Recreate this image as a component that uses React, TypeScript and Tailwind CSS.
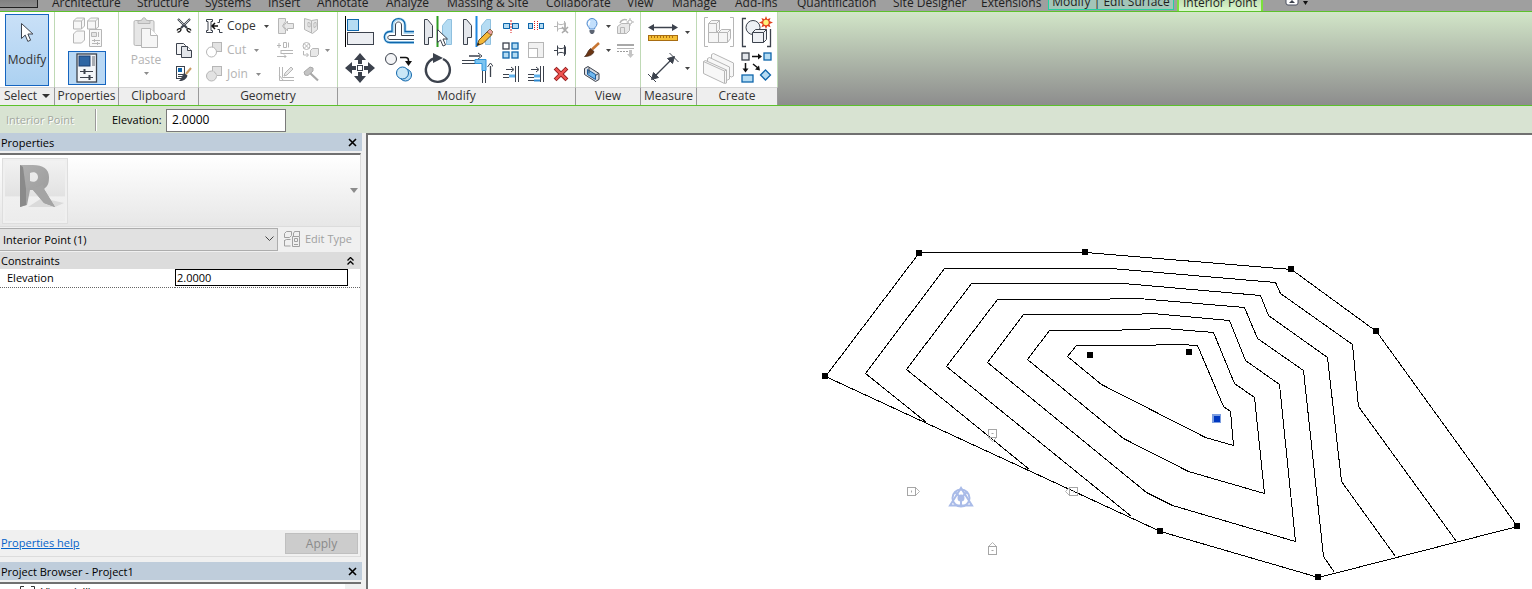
import type { ReactNode } from "react";
import clsx from "clsx";

interface IconProps {
    w?: number;
    h?: number;
    children: ReactNode;
}

const Icon = ({ w = 16, h = 16, children }: IconProps) => (
    <svg width={w} height={h} viewBox={`0 0 ${w} ${h}`} fill="none" className="shrink-0" aria-hidden="true">
        {children}
    </svg>
);

const Caret = ({ dim }: { dim?: boolean }) => (
    <svg width="5" height="3" viewBox="0 0 5 3" className={clsx("shrink-0", dim ? "fill-[#8c8c8c]" : "fill-[#444]")} aria-hidden="true">
        <path d="M0 0h5L2.5 3z" />
    </svg>
);

const DARK = "#3c424d";
const DIM = "#b6b6b6";
const PALE = "#e8e8e8";
const BLUE = "#0f66ab";
const SKY = "#b5dcf3";

/* ---------- tabs ---------- */

const tabs = [
    { name: "Architecture", width: "w-[85px]" },
    { name: "Structure", width: "w-[68px]" },
    { name: "Systems", width: "w-[63px]" },
    { name: "Insert", width: "w-[49px]" },
    { name: "Annotate", width: "w-[69px]" },
    { name: "Analyze", width: "w-[61px]" },
    { name: "Massing & Site", width: "w-[99px]" },
    { name: "Collaborate", width: "w-[81px]" },
    { name: "View", width: "w-[45px]" },
    { name: "Manage", width: "w-[63px]" },
    { name: "Add-Ins", width: "w-[62px]" },
    { name: "Quantification", width: "w-[96px]" },
    { name: "Site Designer", width: "w-[88px]" },
    { name: "Extensions", width: "w-[67px]" },
];

const TabBar = () => (
    <nav className="flex h-3 items-end overflow-hidden border-b border-[#5cc12b] bg-[#9f9f9f] text-[#1e1e1e]">
        <button aria-label="Application menu" className="mb-[3px] mr-[14px] h-6 w-[38px] shrink-0 border-b border-r border-[#222] bg-linear-to-b from-[#666] to-[#8d8d8d]" />
        {tabs.map((tab) => (
            <button key={tab.name} className={clsx("h-4 shrink-0 whitespace-nowrap text-left leading-4", tab.width)}>
                {tab.name}
            </button>
        ))}
        <button className="mb-px mr-[3px] h-4 w-[126px] shrink-0 whitespace-nowrap border border-[#26cfa0] bg-[#a3c5b8] leading-[14px]">
            Modify | Edit Surface
        </button>
        <button className="h-4 w-[86px] shrink-0 whitespace-nowrap border-x-2 border-[#7be03c] bg-linear-to-b from-[#b9d6a8] to-[#dcf7cf] leading-4">
            Interior Point
        </button>
        <button aria-label="Minimize ribbon" className="mb-[5px] ml-[22px] flex items-end gap-1">
            <Icon w={14} h={11}>
                <rect x="1" y="1" width="12" height="9" rx="2" fill="#fff" stroke="#4a5060" />
                <path d="M7 5l3 3H4z" fill={DARK} />
            </Icon>
            <Icon w={5} h={9}>
                <path d="M0 4h5L2.5 8z" fill="#111" />
            </Icon>
        </button>
    </nav>
);

/* ---------- ribbon icons ---------- */

const CursorIcon = () => (
    <Icon w={14} h={22}>
        <path d="M1.5 1.5v15l3.7-3.4 2.6 6.3 2.8-1.2-2.7-6.2h5z" fill="#fff" stroke={DARK} />
    </Icon>
);

const TypePropertiesIcon = () => (
    <Icon w={32} h={32}>
        <g fill="#f7f7f7" stroke={DIM}>
            <path d="M2.500 5l3-3h8v8l-3 3h-8zM16.500 5l3-3h8v9l-3 2h-8zM2.500 18l3-3h8v9l-3 3h-8z" />
            <path d="M2.500 5h8v8M10.500 5l3-3M16.500 5h8v8M24.500 5l3-3" />
            <path d="M18.500 13.500h12v17h-12z" />
            <path d="M20.500 16.500h5v4h-5z" fill="#e4e4e4" />
            <path d="M27.500 16v5M21 24.500h8M21 27.500h8M23.500 23v3M26.500 26v3" />
        </g>
    </Icon>
);

const PropertiesIcon = () => (
    <Icon w={22} h={30}>
        <rect x="1" y="1" width="19.500" height="28" fill="#f4f6f9" stroke={DARK} strokeWidth="1.300" />
        <rect x="3" y="3" width="11" height="10" fill="#2f66a3" stroke="#1c3f70" />
        <rect x="16" y="3" width="3" height="10" fill="#a9adb3" />
        <path d="M4 18.500h13M4 24.500h13" stroke={DARK} />
        <path d="M8.500 16v5M13.500 22v5" stroke={DARK} strokeWidth="2" />
    </Icon>
);

const PasteIcon = () => (
    <Icon w={26} h={31}>
        <g stroke={DIM}>
            <rect x="1" y="3.500" width="20" height="25" rx="1.500" fill="#e6e6e6" />
            <path d="M5 6.500V4l4-1c0-3 4-3 4 0l4 1v2.500z" fill="#d8d8d8" />
            <path d="M8.500 11.500h9l7 7v12h-16z" fill="#f6f6f6" />
            <path d="M17.500 11.500v7h7" fill="#fff" />
        </g>
    </Icon>
);

const ScissorsIcon = () => (
    <Icon>
        <path d="M2 1l9 9M14 1l-9 9" stroke={DARK} strokeWidth="2.200" />
        <path d="M2.500 1.500l5 5M13.500 1.500l-5 5" stroke="#fff" strokeWidth=".7" />
        <path d="M1 12.500c1-2 4-2.500 4-1s-2 3-3.500 2.500M15 12.500c-1-2-4-2.500-4-1s2 3 3.500 2.500" stroke="#111" strokeWidth="1.300" />
    </Icon>
);

const CopyClipIcon = () => (
    <Icon>
        <path d="M.5 1.500h7l2 2v9h-9z" fill="#f3f4f6" stroke={DARK} />
        <path d="M5.500 4.500h6l4 4v7h-10z" fill="#e2e5ea" stroke={DARK} />
        <path d="M11.500 4.500v4h4" fill="#fff" stroke={DARK} />
    </Icon>
);

const MatchIcon = () => (
    <Icon>
        <rect x=".5" y=".5" width="8" height="12" fill="#fff" stroke={DARK} />
        <rect x="2" y="2" width="4" height="4" fill={BLUE} />
        <path d="M2 8.500h5M2 10.500h4" stroke={DARK} />
        <path d="M15 2l-5 6" stroke="#c99b62" strokeWidth="2" />
        <path d="M8 7l3.500 2.500c-1 4-5 6-9 5.500 3-1 3-5 5.500-8z" fill={DARK} />
    </Icon>
);

const CopeIcon = () => (
    <Icon w={17}>
        <path d="M.5 1.500h6v2h-1.500v9h1.500v2h-6v-2H2v-9H.5z" fill="#fff" stroke={DARK} />
        <path d="M6 8h6M9 5L6 8l3 3" stroke="#111" strokeWidth="1.500" />
        <path d="M16.500 1.500h-3v3h-2M11.500 11.500h2v3h3" stroke={DARK} />
    </Icon>
);

const CutIcon = () => (
    <Icon>
        <rect x="6.500" y=".5" width="9" height="9" fill="#e2e2e2" stroke={DIM} />
        <circle cx="5.500" cy="10" r="5" fill="#fff" stroke={DIM} />
    </Icon>
);

const JoinIcon = () => (
    <Icon>
        <rect x="6.500" y=".5" width="9" height="9" fill="#e2e2e2" stroke={DIM} />
        <circle cx="5.500" cy="10" r="5" fill="#e2e2e2" stroke={DIM} />
        <path d="M7 5.500v4h3.500" stroke="#e2e2e2" strokeWidth="2" />
    </Icon>
);

const CutbackIcon = () => (
    <Icon>
        <path d="M.5.5h7v3l-3 4.500 3 4v3.500h-7z" fill={PALE} stroke={DIM} />
        <path d="M15.500 5.500h-6V3l-4 5 4 5v-2.500h6z" fill={PALE} stroke={DIM} />
    </Icon>
);

const SurfaceIcon = () => (
    <Icon>
        <path d="M1.500.5l7 2 6-1v10l-5 4-8-4z" fill={PALE} stroke={DIM} />
        <path d="M8.500 3v12M5 4.500l2 .5v4l-2-.5zM11 5l2-.500v4l-2 1z" fill="#fff" stroke={DIM} />
    </Icon>
);

const BeamJoinIcon = () => (
    <Icon w={17}>
        <path d="M0 3.500h4M2 1v5M6.500.5v5h3v-5zM11.500.5v5M4 8.500h12M4 11.500h12M4 8v4M0 14.500h9M7 12.500l2 2-2 2" stroke={DIM} />
    </Icon>
);

const UnjoinIcon = () => (
    <Icon w={17}>
        <circle cx="4.500" cy="4" r="3.500" stroke={DIM} />
        <path d="M2 1.500l5 5M7 1.500l-5 5M1.500 9v4H6M4.500 11l2 2-2 2" stroke={DIM} />
        <path d="M8.500 8.500l2-2h6v6l-2 2h-6z" fill={PALE} stroke={DIM} />
    </Icon>
);

const WallJoinIcon = () => (
    <Icon>
        <path d="M1.500 1v13.500H16M4.500 1v10.500H16M1 9l4 5" stroke={DIM} />
        <path d="M6 10l1-3 6-6 2 2-6 6z" fill={PALE} stroke={DIM} />
    </Icon>
);

const HammerIcon = () => (
    <Icon>
        <path d="M7 7l8 7.500" stroke="#a8a8a8" strokeWidth="2.200" />
        <path d="M1 6l6-5 3 1v3L5 9.500 2 9z" fill="#c4c4c4" stroke="#a8a8a8" />
    </Icon>
);

const AlignIcon = () => (
    <Icon w={32} h={32}>
        <path d="M1.500 0v31" stroke="#000" />
        <rect x="3.500" y="3.500" width="11" height="11" fill={SKY} stroke={BLUE} />
        <rect x="3.500" y="16.500" width="26" height="12" fill="#eceef2" stroke={DARK} />
    </Icon>
);

const OffsetIcon = () => (
    <Icon w={32} h={32}>
        <path d="M31 16.500H22V9c0-8-12-8-12 0v6.500H7c-7 0-7 11 0 11h24" stroke={SKY} strokeWidth="3" />
        <path d="M31 15.500H22V9c0-8.500-13-8.500-13 0v6.500H7c-7.500 0-7.500 11 0 11h24" stroke={BLUE} strokeWidth="1.300" />
        <path d="M31 19.500H18.500V9c0-4-6-4-6 0v10.500H7c-3 0-3 4 0 4h24" fill="#fff" stroke={DARK} />
    </Icon>
);

const MirrorPickIcon = () => (
    <Icon w={32} h={32}>
        <path d="M2.500 3.500h3l5 6v12h-4v7h-4z" fill="#e4e7ec" stroke={DARK} />
        <path d="M29.500 3.500h-4l-5 6v12h4v7h5z" fill={SKY} stroke="#8fc0df" />
        <path d="M15.500 0v31" stroke="#2c9b22" strokeWidth="2" />
        <path d="M15.500 13.500v13l3-2.500 2.500 6 2.500-1-2.500-6h4.500z" fill="#fff" stroke={DARK} />
    </Icon>
);

const MirrorDrawIcon = () => (
    <Icon w={32} h={32}>
        <path d="M2.500 3.500h3l5 6v12h-4v7h-4z" fill="#e4e7ec" stroke={DARK} />
        <path d="M29.500 3.500h-4l-5 6v12h4v7h5z" fill={SKY} stroke="#8fc0df" />
        <path d="M15.500 0v31" stroke="#1f86e0" strokeWidth="2" />
        <path d="M16 29.500l2-5.500 9-9 4 3.500-9 9z" fill="#f4b838" stroke="#6b4a1b" />
        <path d="M26 16l3-3 3 3-2 3z" fill="#e9a0a0" stroke="#6b4a1b" strokeWidth=".7" />
        <path d="M16 29.500l1-3 2 2z" fill="#222" />
    </Icon>
);

const MoveIcon = () => (
    <Icon w={32} h={32}>
        <path d="M16 1l6 7h-4v4h-4V8h-4zM16 31l6-7h-4v-4h-4v4h-4zM1 16l7-6v4h4v4H8v4zM31 16l-7-6v4h-4v4h4v4z" fill={DARK} />
        <rect x="13.500" y="13.500" width="5" height="5" fill="#fff" stroke={DARK} />
    </Icon>
);

const CopyIcon = () => (
    <Icon w={32} h={32}>
        <circle cx="8" cy="7" r="5.500" fill="#f3f4f6" stroke={DARK} />
        <path d="M17 5.500h5.500c2 0 3 1 3 3v3" stroke="#111" strokeWidth="1.500" />
        <path d="M22 9l3.500 5L29 9z" fill="#111" />
        <circle cx="22.500" cy="23" r="6" fill={SKY} stroke={BLUE} />
        <circle cx="19.500" cy="21" r="6" fill="#c9e7f7" stroke={BLUE} />
    </Icon>
);

const RotateIcon = () => (
    <Icon w={32} h={32}>
        <path d="M21 7a12 12 0 1 1-9-.5" stroke={DARK} strokeWidth="2.400" />
        <path d="M11 1l10 5-10 5z" fill={DARK} />
    </Icon>
);

const TrimCornerIcon = () => (
    <Icon w={32} h={32}>
        <path d="M1 8.500h13M1 11.500h13M21.500 19v12M24.500 19v12" stroke={DARK} />
        <path d="M14 7.500h11v11h-4v-7h-7z" fill="#7cc4f0" stroke="#2c94dc" />
        <path d="M8 4h11M29.500 25V14" stroke={DARK} strokeWidth="1.300" />
        <path d="M17 1l4 3-4 3M26.500 15l3-4 3 4" stroke={DARK} />
    </Icon>
);

const SplitIcon = ({ gap }: { gap?: boolean }) => (
    <Icon>
        {gap ? (
            <g fill={SKY} stroke={BLUE}>
                <rect x=".5" y="5.500" width="4" height="5" />
                <rect x="11.500" y="5.500" width="4" height="5" />
                <path d="M6.500 3v10M9.500 3v10" stroke="#d22" strokeDasharray="1 1" />
            </g>
        ) : (
            <g fill={SKY} stroke={BLUE}>
                <path d="M6 5.500H.5v5H6M10 5.500h5.500v5H10M6.500 5v6M9.500 5v6" />
                <path d="M8 2v13" stroke="#d22" strokeDasharray="2 1" />
            </g>
        )}
    </Icon>
);

const ArrayIcon = () => (
    <Icon w={17} h={17}>
        <rect x="1" y="1" width="6" height="6" fill="#fff" stroke={DARK} strokeWidth="1.300" />
        <g fill={SKY} stroke={BLUE} strokeWidth="1.300">
            <rect x="10" y="1" width="6" height="6" />
            <rect x="1" y="10" width="6" height="6" />
            <rect x="10" y="10" width="6" height="6" />
        </g>
    </Icon>
);

const ScaleIcon = () => (
    <Icon>
        <rect x=".5" y=".5" width="15" height="15" fill="#f1f1f1" stroke={DIM} />
        <rect x=".5" y="6.500" width="9" height="9" fill="#fff" stroke={DIM} />
    </Icon>
);

const PinIcon = ({ off }: { off?: boolean }) => (
    <Icon>
        <path d="M1 8.500h4M4.500 3.500v10M4.500 5.500c2 1.500 5 1.500 7 0v6c-2-1.500-5-1.500-7 0M11.500 3v11M12.500 4.500v8" stroke={off ? DIM : DARK} fill="none" />
        {off && <path d="M9 9l6 6M15 9l-6 6" stroke="#a9a9a9" strokeWidth="1.500" />}
    </Icon>
);

const ExtendIcon = ({ multi }: { multi?: boolean }) => (
    <Icon>
        <path d="M3 3.500h7M8 1l3 2.500L8 6M12.500 0v16M15.500 0v16" stroke={DARK} />
        <path d="M0 8.500h6M0 11.500h6" stroke={DARK} />
        <path d="M6 10h6" stroke="#5fb0ea" strokeWidth="3" />
        {multi && (
            <>
                <path d="M0 14.500h6" stroke={DARK} />
                <path d="M6 14.500h6" stroke="#2c88d0" strokeWidth="2" />
            </>
        )}
    </Icon>
);

const DeleteIcon = () => (
    <Icon>
        <path d="M3.500 3.500l9 9M12.500 3.500l-9 9" stroke="#8e1c1c" strokeWidth="4" strokeLinecap="square" />
        <path d="M3.500 3.500l9 9M12.500 3.500l-9 9" stroke="#ef5350" strokeWidth="2.400" strokeLinecap="square" />
    </Icon>
);

const BulbIcon = () => (
    <Icon>
        <path d="M5.500 11C5.500 9 3 8.500 3 5.500 3 2.500 5.500.5 8 .5s5 2 5 5c0 3-2.500 3.500-2.500 5.500z" fill="#c2dffc" stroke="#4d87cc" />
        <path d="M6 3c-1 1-1.500 2-1 4" stroke="#fff" strokeWidth="1.500" />
        <path d="M5.500 12h5v2l-1.500 2H7l-1.500-2z" fill="#5c6472" />
    </Icon>
);

const BrushIcon = () => (
    <Icon>
        <path d="M15 1L8 7.500" stroke="#c87633" strokeWidth="2.500" />
        <path d="M6.500 6.500L10 9.500c-1 3.500-5 5-9.500 5 2.500-1 3-6 6-8z" fill="#6b3513" stroke="#3d2415" strokeWidth=".7" />
    </Icon>
);

const SectionBoxIcon = () => (
    <Icon>
        <path d="M.5 2.500L4 .5l11 7v6L11.500 15.500.5 8.500z" fill="#d9dde4" stroke={DARK} />
        <path d="M3.500 3.500l8 5v5l-8-5z" fill="#6fb8f0" stroke="#1d5c9c" />
        <path d="M5 1.500v6M11.500 9.500l3-2" stroke={DARK} />
    </Icon>
);

const DisplaceIcon = () => (
    <Icon w={17}>
        <path d="M.5 8.500l4-3h8v7l-3 3h-9zM3.500 9.500h4v6h-4z" fill={PALE} stroke={DIM} />
        <path d="M3 5c1-3 4-4 7-3" stroke={DIM} strokeWidth="1.500" />
        <circle cx="13" cy="4" r="2" fill="#fff" stroke={DIM} />
        <path d="M13 0v2M13 6v2M9.500 4H11M15 4h2" stroke={DIM} />
    </Icon>
);

const LineworkIcon = () => (
    <Icon w={17}>
        <path d="M0 3h17" stroke="#a8a8a8" strokeWidth="2" />
        <path d="M0 6.500h17" stroke={DIM} />
        <path d="M0 9.500h11" stroke="#9c9c9c" strokeDasharray="2 1" />
        <path d="M12 8h3v4h2l-3.500 4-3.500-4h2z" fill="#c4c4c4" />
    </Icon>
);

const RulerIcon = () => (
    <Icon w={32} h={32}>
        <path d="M3 11.500h26" stroke={DARK} strokeWidth="1.500" />
        <path d="M1 11.500l6-3.500v7zM31 11.500l-6-3.500v7z" fill={DARK} />
        <rect x="1.500" y="19.500" width="29" height="5" fill="#f5bf35" stroke="#a86d12" />
        <path d="M4.500 19v3M7.500 19v3M10.500 19v3M13.500 19v3M16.500 19v3M19.500 19v3M22.500 19v3M25.500 19v3" stroke="#a86d12" />
    </Icon>
);

const AlignedDimIcon = () => (
    <Icon w={32} h={32}>
        <path d="M7 25L25 7" stroke={DARK} strokeWidth="1.300" />
        <path d="M4.500 27.500l2-7 5 5zM27.500 4.500l-2 7-5-5zM1 22l8 8M22.500 1l9 9" fill={DARK} stroke={DARK} />
    </Icon>
);

const AssemblyIcon = () => (
    <Icon w={32} h={32}>
        <path d="M5 1.500H1.500v29H5M27 1.500h3.500v29H27" stroke={DIM} />
        <g fill="#f5f5f5" stroke={DIM}>
            <path d="M5.500 7.500l3-3h8v9l-3 3h-8zM5.500 16.500h10v10h-10zM15.500 16.500l3-3h9v9l-3 4h-9z" />
            <path d="M5.500 7.500h8v9M13.500 7.500l3-3M15.500 16.500h9v10M24.500 16.500l3-3" />
        </g>
    </Icon>
);

const CreateGroupIcon = () => (
    <Icon w={32} h={32}>
        <path d="M5 2.500H1.500v28H5M26 30.500h3.500V13" stroke={DARK} strokeWidth="1.300" />
        <circle cx="12" cy="11.500" r="7" fill="#edf0f4" stroke={DARK} />
        <path d="M11.500 16.500l3-3h11v10l-3 3h-11z" fill="#eef0f4" stroke={DARK} />
        <path d="M11.500 16.500h11v10M22.500 16.500l3-3" stroke={DARK} />
        <path d="M25 0l1.300 3.300L29.500 2 28.400 5 32 6.500 28.400 8l1.100 3.200-3.200-1.300L25 13l-1.300-3.100-3.200 1.300L21.600 8 18 6.500 21.600 5l-1.100-3 3.200 1.300z" fill="#e2401c" />
        <circle cx="25" cy="6.500" r="2.700" fill="#fff27a" />
    </Icon>
);

const PartsIcon = () => (
    <Icon w={34} h={32}>
        <g fill="#f7f7f7" stroke={DIM}>
            <path d="M9.500 2.500l2-1 20 9.500v13l-2 1-20-9.500z" />
            <path d="M5.500 6.500l2-1 20 9.500v12l-2 1-20-9.500z" />
            <path d="M1.500 9.500l2-1 21 9.500v13l-2 .5-21-10z" />
            <path d="M1.500 9.500l21 9.500v12M22.500 19l2-1" />
        </g>
    </Icon>
);

const SimilarIcon = () => (
    <Icon w={32} h={32}>
        <rect x="1" y="1" width="7" height="7" fill="#e4e7ec" stroke={DARK} strokeWidth="1.300" />
        <rect x="23" y="1" width="7" height="7" fill={SKY} stroke={BLUE} strokeWidth="1.300" />
        <rect x="1" y="23" width="11" height="7" fill={SKY} stroke={BLUE} strokeWidth="1.300" />
        <path d="M24.500 18l5 5-5 5-5-5z" fill={SKY} stroke={BLUE} strokeWidth="1.300" />
        <path d="M11 4.500h7M4.500 11v6M12 12l5 4" stroke="#111" strokeWidth="1.500" />
        <path d="M17 1.500l4 3-4 3zM1.500 16.500l3 4 3-4zM19 18.500l-5-1 4-4z" fill="#111" />
    </Icon>
);

/* ---------- ribbon ---------- */

interface PanelProps {
    title: string;
    width: string;
    caret?: boolean;
    children: ReactNode;
}

const Panel = ({ title, width, caret, children }: PanelProps) => (
    <section className={clsx("flex shrink-0 flex-col bg-white", width)}>
        <div className="flex h-[75px] border-r border-[#bfd9b5] pt-[2px]">{children}</div>
        <h2 className="flex h-[18px] items-center justify-center gap-[5px] border-r border-t border-r-[#999] border-t-[#d5d5d5] bg-[#eee] pb-px text-[#333]">
            {title}
            {caret && (
                <svg width="8" height="4" viewBox="0 0 8 4" className="fill-[#333]">
                    <path d="M0 0h8L4 4z" />
                </svg>
            )}
        </h2>
    </section>
);

interface ToolProps {
    label: string;
    large?: boolean;
    children: ReactNode;
}

const Tool = ({ label, large, children }: ToolProps) => (
    <button aria-label={label} className={clsx("flex items-center justify-center", large ? "h-9" : "h-6")}>
        {children}
    </button>
);

const GeometryTool = ({ label, dim, icon }: { label: string; dim?: boolean; icon: ReactNode }) => (
    <button className={clsx("flex h-6 items-center gap-1 text-xs", dim ? "text-[#b3b3b3]" : "text-[#333]")}>
        <span className="w-[17px]">{icon}</span>
        {label}
        <span className="ml-1">
            <Caret dim={dim} />
        </span>
    </button>
);

const Ribbon = () => (
    <div className="flex border-b border-[#5cc12b] bg-linear-to-b from-[#d2e6c8] to-[#8d8d8d]">
        <Panel title="Select" width="w-[55px]" caret>
            <button className="ml-[5px] flex h-[72px] w-11 flex-col items-center border border-[#1565c0] bg-linear-to-b from-[#c9e0f7] to-[#acd1f1] pt-[7px] text-xs text-[#333]">
                <CursorIcon />
                <span className="mt-2">Modify</span>
            </button>
        </Panel>
        <Panel title="Properties" width="w-[64px]">
            <div className="flex grow flex-col items-center">
                <Tool label="Type Properties" large>
                    <TypePropertiesIcon />
                </Tool>
                <button aria-label="Properties" className="mt-px flex h-[34px] w-[38px] items-center justify-center border border-[#1565c0] bg-[#b9d8f4]">
                    <PropertiesIcon />
                </button>
            </div>
        </Panel>
        <Panel title="Clipboard" width="w-[80px]">
            <button className="ml-2 flex w-[38px] flex-col items-center pt-[3px] text-xs leading-4 text-[#b3b3b3]">
                <PasteIcon />
                <span className="mb-1 mt-1">Paste</span>
                <Caret dim />
            </button>
            <div className="ml-[11px] flex flex-col">
                <Tool label="Cut to Clipboard"><ScissorsIcon /></Tool>
                <Tool label="Copy to Clipboard"><CopyClipIcon /></Tool>
                <Tool label="Match Type Properties"><MatchIcon /></Tool>
            </div>
        </Panel>
        <Panel title="Geometry" width="w-[139px]">
            <div className="ml-[7px] flex w-[71px] flex-col">
                <GeometryTool label="Cope" icon={<CopeIcon />} />
                <GeometryTool label="Cut" dim icon={<CutIcon />} />
                <GeometryTool label="Join" dim icon={<JoinIcon />} />
            </div>
            <div className="grid h-[72px] grid-cols-[17px_17px] gap-x-2">
                <Tool label="Cutback"><CutbackIcon /></Tool>
                <Tool label="Split Face"><SurfaceIcon /></Tool>
                <Tool label="Beam Joins"><BeamJoinIcon /></Tool>
                <Tool label="Unjoin"><UnjoinIcon /></Tool>
                <Tool label="Wall Joins"><WallJoinIcon /></Tool>
                <Tool label="Demolish"><HammerIcon /></Tool>
            </div>
            <button aria-label="Join options" className="ml-[6px] flex h-[72px] items-center">
                <Caret dim />
            </button>
        </Panel>
        <Panel title="Modify" width="w-[238px]">
            <div className="ml-[6px] grid h-[72px] grid-cols-[32px_32px_32px_32px] gap-x-[7px]">
                <Tool label="Align" large><AlignIcon /></Tool>
                <Tool label="Offset" large><OffsetIcon /></Tool>
                <Tool label="Mirror - Pick Axis" large><MirrorPickIcon /></Tool>
                <Tool label="Mirror - Draw Axis" large><MirrorDrawIcon /></Tool>
                <Tool label="Move" large><MoveIcon /></Tool>
                <Tool label="Copy" large><CopyIcon /></Tool>
                <Tool label="Rotate" large><RotateIcon /></Tool>
                <Tool label="Trim to Corner" large><TrimCornerIcon /></Tool>
            </div>
            <div className="ml-[9px] grid h-[72px] grid-cols-[17px_17px_17px] gap-x-2">
                <Tool label="Split Element"><SplitIcon /></Tool>
                <Tool label="Split with Gap"><SplitIcon gap /></Tool>
                <Tool label="Unpin"><PinIcon off /></Tool>
                <Tool label="Array"><ArrayIcon /></Tool>
                <Tool label="Scale"><ScaleIcon /></Tool>
                <Tool label="Pin"><PinIcon /></Tool>
                <Tool label="Trim Single"><ExtendIcon /></Tool>
                <Tool label="Trim Multiple"><ExtendIcon multi /></Tool>
                <Tool label="Delete"><DeleteIcon /></Tool>
            </div>
        </Panel>
        <Panel title="View" width="w-[65px]">
            <div className="ml-[7px] grid h-[72px] grid-cols-[17px_5px_17px] items-center gap-x-[6px]">
                <Tool label="Hide in View"><BulbIcon /></Tool>
                <Caret />
                <Tool label="Displace Elements"><DisplaceIcon /></Tool>
                <Tool label="Override Graphics"><BrushIcon /></Tool>
                <Caret />
                <Tool label="Linework"><LineworkIcon /></Tool>
                <Tool label="Selection Box"><SectionBoxIcon /></Tool>
            </div>
        </Panel>
        <Panel title="Measure" width="w-[56px]">
            <div className="ml-[6px] grid h-[72px] grid-cols-[32px_5px] items-center gap-x-[6px]">
                <Tool label="Measure" large><RulerIcon /></Tool>
                <Caret />
                <Tool label="Aligned Dimension" large><AlignedDimIcon /></Tool>
                <Caret />
            </div>
        </Panel>
        <Panel title="Create" width="w-[81px]">
            <div className="ml-[5px] grid h-[72px] grid-cols-[34px_34px] gap-x-1">
                <Tool label="Create Assembly" large><AssemblyIcon /></Tool>
                <Tool label="Create Group" large><CreateGroupIcon /></Tool>
                <Tool label="Create Parts" large><PartsIcon /></Tool>
                <Tool label="Create Similar" large><SimilarIcon /></Tool>
            </div>
        </Panel>
    </div>
);

const OptionsBar = () => (
    <div className="flex h-[27px] shrink-0 items-center bg-[#d8e3d2] pt-px">
        <span className="ml-[6px] w-[89px] text-[#a3a8a0] [text-shadow:1px_1px_0_#fff]">Interior Point</span>
        <span className="h-[22px] w-[2px] border-l border-[#9a9a9a] bg-white" />
        <label htmlFor="option-elevation" className="ml-[15px] w-[54px]">
            Elevation:
        </label>
        <input
            id="option-elevation"
            defaultValue="2.0000"
            className="h-[23px] w-[120px] border border-[#7a7a7a] bg-white px-[5px] pb-[2px] text-xs outline-none"
        />
    </div>
);

/* ---------- left column ---------- */

const PaletteTitle = ({ title }: { title: string }) => (
    <div className="flex h-[18px] shrink-0 items-center justify-between bg-[#bfcddb] pl-px pr-[5px] pt-px">
        <h2>{title}</h2>
        <button aria-label={`Close ${title}`}>
            <Icon w={9} h={9}>
                <path d="M1 1l7 7M8 1L1 8" stroke="#000" strokeWidth="1.600" />
            </Icon>
        </button>
    </div>
);

const TypeThumbnail = () => (
    <svg width="66" height="66" viewBox="0 0 66 66" aria-hidden="true">
        <defs>
            <linearGradient id="thumb" x1="0" y1="0" x2="0" y2="1">
                <stop offset="0" stopColor="#f2f2f2" />
                <stop offset=".58" stopColor="#e2e2e2" />
                <stop offset=".6" stopColor="#f0f0f0" />
                <stop offset="1" stopColor="#ececec" />
            </linearGradient>
            <linearGradient id="logo" x1="0" y1="0" x2="1" y2="1">
                <stop offset="0" stopColor="#b0b0b0" />
                <stop offset="1" stopColor="#969696" />
            </linearGradient>
        </defs>
        <rect x=".5" y=".5" width="65" height="65" fill="#f0f0f0" stroke="#dedede" />
        <rect x="3" y="3" width="60" height="60" fill="url(#thumb)" />
        <path d="M26 49l14-9 22 5-9 4z" fill="#dadada" />
        <path
            fillRule="evenodd"
            d="M18 7h13c10 0 16 4 16 12 0 6-1 9-5 12l11 18-11-4-11-13-3 0-3 15-7 2zM28 15v8c4 2 8 0 8-4s-4-6-8-4z"
            fill="url(#logo)"
        />
        <path d="M18 7l3 2 3 22v16l-6 2z" fill="#8a8a8a" />
        <path d="M24 31c6-2 12-1 17-5l1 5 11 18-11-4-11-13z" fill="#a4a4a4" />
    </svg>
);

const PropertiesPalette = () => (
    <section className="flex grow flex-col">
        <PaletteTitle title="Properties" />
        <div className="mr-px mt-[2px] flex grow flex-col border-r border-t-2 border-r-[#dcdcdc] border-t-[#707070]">
            <button className="flex h-[72px] shrink-0 items-center justify-between border-b border-[#dcdcdc] bg-linear-to-b from-white to-[#e7e7e7] pl-[2px]" aria-label="Type selector">
                <TypeThumbnail />
                <svg width="8" height="5" viewBox="0 0 8 5" className="mr-[2px] fill-[#8c8c8c]">
                    <path d="M0 0h8L4 5z" />
                </svg>
            </button>
            <div className="flex h-[25px] shrink-0 items-center">
                <div className="relative">
                    <select aria-label="Element filter" className="h-[23px] w-[278px] appearance-none border border-l-0 border-[#adadad] bg-[#e1e1e1] pl-[3px] outline-none">
                        <option>Interior Point (1)</option>
                    </select>
                    <svg width="9" height="6" viewBox="0 0 9 6" fill="none" className="pointer-events-none absolute right-1 top-2">
                        <path d="M.5.5l4 4 4-4" stroke="#444" />
                    </svg>
                </div>
                <button disabled className="ml-[6px] flex items-center gap-1 pb-[2px] text-[#a0a0a0]">
                    <Icon w={17} h={17}>
                        <path d="M.5 3.500l2-2h5v4l-2 2h-5zM9.500 3.500l1-2h5M9.500 3v4M15.500 1v5M.5 10.500l2-1h4M.5 10v6h6M8.500 6.500h7v10h-7zM10.500 8.500h3v3h-3zM10 14.500h4" stroke="#a0a0a0" />
                    </Icon>
                    Edit Type
                </button>
            </div>
            <table className="w-full table-fixed border-collapse bg-white">
                <thead>
                    <tr className="h-[17px] bg-[#dcdcdc]">
                        <th className="w-[175px] p-0 pl-px text-left font-normal">Constraints</th>
                        <th className="p-0 pr-[6px]">
                            <svg width="7" height="8" viewBox="0 0 7 8" fill="none" className="ml-auto">
                                <path d="M.5 3.500l3-3 3 3M.5 7.500l3-3 3 3" stroke="#000" strokeWidth="1.300" />
                            </svg>
                        </th>
                    </tr>
                </thead>
                <tbody>
                    <tr className="h-[18px] border-b border-dotted border-[#666]">
                        <td className="p-0 pl-[7px]">
                            <label htmlFor="elevation">Elevation</label>
                        </td>
                        <td className="p-0">
                            <input id="elevation" defaultValue="2.0000" className="block h-[17px] w-[173px] border border-black bg-white pl-px outline-none" />
                        </td>
                    </tr>
                </tbody>
            </table>
            <div className="grow bg-white" />
            <footer className="flex h-[27px] shrink-0 items-center justify-between border-b border-[#dcdcdc] pl-px pr-[2px]">
                <a href="#help" className="text-[#0563c9] underline">
                    Properties help
                </a>
                <button disabled className="h-[21px] w-[73px] border border-[#bfbfbf] bg-[#ccc] pt-px text-xs leading-4 text-[#8a8a8a]">
                    Apply
                </button>
            </footer>
        </div>
    </section>
);

const ProjectBrowser = () => (
    <section className="mt-[5px] h-[27px] shrink-0">
        <PaletteTitle title="Project Browser - Project1" />
        <div className="mr-px mt-[2px] flex h-[7px] items-start overflow-hidden border-t-2 border-[#707070] bg-white">
            <ul className="grow pl-5">
                <li className="flex gap-[6px] pt-[2px] leading-3">
                    <Icon w={15} h={12}>
                        <path d="M4 .5H.5v11H4M11 .5h3.500v11H11" stroke="#333" />
                    </Icon>
                    Views (all)
                </li>
            </ul>
            <div className="h-5 w-4 bg-[#f0f0f0]" />
        </div>
    </section>
);

/* ---------- drawing area ---------- */

const boundary = "825,376 919,252 1085,252 1291,269 1376,331 1517,526 1318,577 1160,531";

const openContours = [
    "926,422 865,373 944,268 1111,268 1275,282 1280,293 1352,344 1358,406 1456,541",
    "1029,469 906,369 971,283 1123,283 1260,295 1268,315 1327,357 1341,481 1395,556",
    "1131,516 946,366 997,299 1107,299 1112,298 1138,298 1244,307 1257,338 1303,370 1323,556 1334,572",
];

const closedContours = [
    "987,362 1023,314 1131,314 1152,313 1229,320 1245,360 1279,384 1295,541 1172,505 1146,492",
    "1027,359 1049,330 1108,330 1164,328 1213,332 1234,383 1254,397 1264,493 1188,471 1123,438",
    "1067,356 1076,345 1132,345 1180,344 1197,345 1223,406 1230,411 1233,445 1205,437 1101,384",
];

const surfacePoints = [
    [825, 376],
    [919, 253],
    [1085, 252],
    [1291, 269],
    [1376, 331],
    [1517, 526],
    [1318, 577],
    [1160, 531],
    [1090, 355],
    [1189, 352],
];

const elevationMarks = [
    { x: 992, y: 433, angle: 180 },
    { x: 911, y: 491, angle: 90 },
    { x: 1073, y: 491, angle: 270 },
    { x: 992, y: 550, angle: 0 },
];

const DrawingArea = () => (
    <main className="grow overflow-hidden border-l-2 border-t-2 border-[#707070] bg-white">
        <svg width="1164" height="454" viewBox="368 135 1164 454" fill="none" role="img" aria-label="Toposurface contours">
            <g stroke="#000" shapeRendering="crispEdges" transform="translate(.5 .5)">
                <polygon points={boundary} />
                {openContours.map((points) => (
                    <polyline key={points} points={points} />
                ))}
                {closedContours.map((points) => (
                    <polygon key={points} points={points} />
                ))}
            </g>
            {surfacePoints.map(([x, y]) => (
                <rect key={`${x}-${y}`} x={x - 3} y={y - 3} width="6" height="6" fill="#000" />
            ))}
            <rect x="1212" y="414" width="9" height="9" fill="#7d9ee0" />
            <rect x="1214" y="416" width="6" height="6" fill="#0038c0" />
            {elevationMarks.map((mark) => (
                <g key={`${mark.x}-${mark.y}`} transform={`translate(${mark.x + 0.5} ${mark.y + 0.5}) rotate(${mark.angle})`} stroke="#a6a6a6">
                    <rect x="-4" y="-4" width="8" height="8" />
                    <path d="M-3.500-4.500L0-8l3.500 3.500" stroke="#b4b4b4" />
                    <path d="M-1 0h2" />
                </g>
            ))}
            <g stroke="#a9bbe8" strokeWidth="2">
                <path d="M961 488l-11 17.500h22z" />
                <circle cx="961" cy="498" r="8.500" />
                <circle cx="961" cy="498" r="2.500" fill="#a9bbe8" />
                <path d="M961 498l-6-6M961 498l6-6M961 498v9" />
            </g>
        </svg>
    </main>
);

const App = () => (
    <div className="flex h-screen flex-col overflow-hidden bg-[#f0f0f0] font-['Open_Sans','Noto_Sans',sans-serif] text-[11px] leading-4 text-black">
        <header className="shrink-0 text-xs leading-4">
            <TabBar />
            <Ribbon />
        </header>
        <OptionsBar />
        <div className="flex min-h-0 grow">
            <aside className="mr-1 flex w-[362px] shrink-0 flex-col">
                <PropertiesPalette />
                <ProjectBrowser />
            </aside>
            <DrawingArea />
        </div>
    </div>
);

export default App;
